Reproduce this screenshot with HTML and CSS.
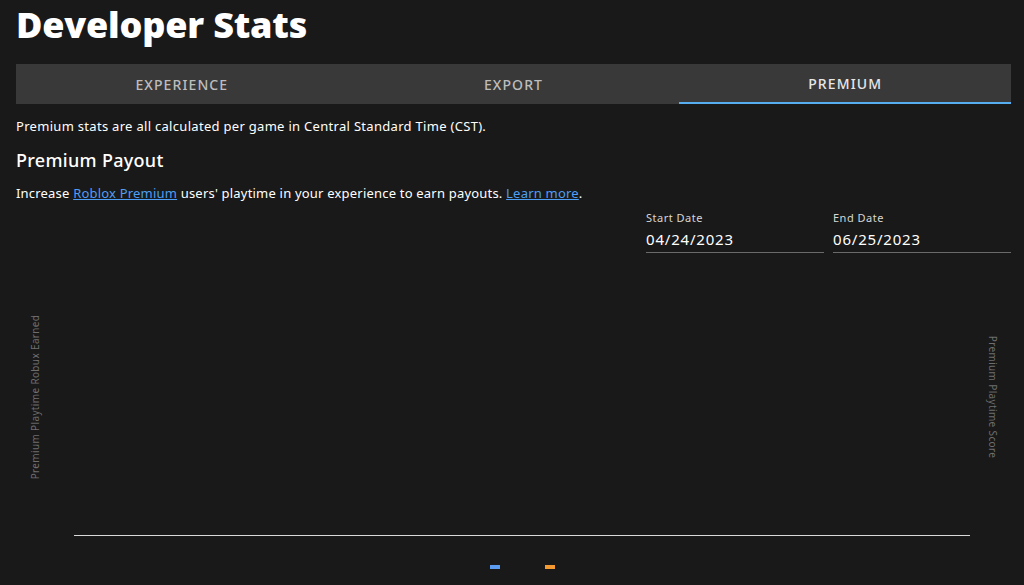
FILE: index.html
```html
<!DOCTYPE html>
<html lang="en">
<head>
    <meta charset="UTF-8">
    <meta name="viewport" content="width=device-width, initial-scale=1.0">
    <title>Developer Stats</title>
    <link rel="stylesheet" href="styles.css">
</head>
<body>
    <div class="container">
        <h1>Developer Stats</h1>
        <div class="tabs">
            <div class="tab">Experience</div>
            <div class="tab">Export</div>
            <div class="tab active">Premium</div>
        </div>
        <p class="note">Premium stats are all calculated per game in Central Standard Time (CST).</p>
        <h2>Premium Payout</h2>
        <p class="intro">Increase <a href="#">Roblox Premium</a> users' playtime in your experience to earn payouts. <a href="#">Learn more</a>.</p>
        <div class="dates">
            <div class="date-field">
                <label>Start Date</label>
                <div class="date-value">04/24/2023</div>
            </div>
            <div class="date-field">
                <label>End Date</label>
                <div class="date-value">06/25/2023</div>
            </div>
        </div>
        <div class="chart">
            <div class="axis-label left"><span>Premium Playtime Robux Earned</span></div>
            <div class="plot">
                <div class="plot-area"></div>
                <div class="legend">
                    <span class="swatch blue"></span>
                    <span class="swatch orange"></span>
                </div>
            </div>
            <div class="axis-label right"><span>Premium Playtime Score</span></div>
        </div>
    </div>
</body>
</html>
```

FILE: styles.css
```css
body {
    font-family: "Noto Sans", Arial, sans-serif;
    margin: 0;
    background-color: #191919;
    color: #fff;
    overflow: hidden;
}
.container {
    padding: 0 13px 0 16px;
}
h1 {
    font-family: "Open Sans", sans-serif;
    font-size: 36px;
    font-weight: 800;
    line-height: 50px;
    margin: 0 0 14px;
    letter-spacing: -0.2px;
}
.tabs {
    display: flex;
    background-color: #393939;
    height: 40px;
}
.tab {
    flex: 1;
    display: flex;
    align-items: center;
    justify-content: center;
    text-transform: uppercase;
    font-size: 14px;
    font-weight: 500;
    letter-spacing: 1.1px;
    color: #bdbdbd;
    box-sizing: border-box;
}
.tab.active {
    color: #e6e6e6;
    border-bottom: 2px solid #56aef0;
    padding-top: 1px;
}
.note {
    font-size: 13px;
    margin: 13px 0 0;
    line-height: 18px;
    letter-spacing: 0.3px;
}
h2 {
    font-size: 18px;
    font-weight: 500;
    margin: 13px 0 0;
    line-height: 24px;
    letter-spacing: 0.3px;
}
.intro {
    font-size: 13px;
    margin: 12px 0 0;
    line-height: 18px;
    letter-spacing: 0.2px;
}
.intro a {
    color: #4e9ef5;
}
.dates {
    display: flex;
    justify-content: flex-end;
    gap: 9px;
    margin-top: 8px;
}
.date-field {
    width: 178px;
    border-bottom: 1px solid #6a6a6a;
    padding-bottom: 3px;
}
.date-field label {
    display: block;
    font-size: 11px;
    color: #d6d6d6;
    line-height: 16px;
    letter-spacing: 0.5px;
}
.date-value {
    font-size: 15px;
    line-height: 20px;
    margin-top: 3px;
    letter-spacing: 0.8px;
}
.chart {
    display: flex;
    height: 330px;
}
.axis-label {
    width: 58px;
    display: flex;
    align-items: center;
    justify-content: center;
    color: #6e6e6e;
    font-size: 10px;
    letter-spacing: 0.35px;
    padding-bottom: 42px;
}
.axis-label span {
    white-space: nowrap;
}
.axis-label.left span {
    transform: rotate(-90deg);
    margin-left: -20px;
}
.axis-label.right {
    width: 41px;
}
.axis-label.right span {
    transform: rotate(90deg);
    margin-left: 6px;
}
.plot {
    flex: 1;
    display: flex;
    flex-direction: column;
}
.plot-area {
    height: 282px;
    border-bottom: 1px solid #d9d9d9;
}
.legend {
    display: flex;
    justify-content: center;
    gap: 45px;
    margin-top: 29px;
}
.swatch {
    width: 10px;
    height: 4px;
}
.swatch.blue {
    background-color: #5b9cf0;
}
.swatch.orange {
    background-color: #f59a30;
}
```
